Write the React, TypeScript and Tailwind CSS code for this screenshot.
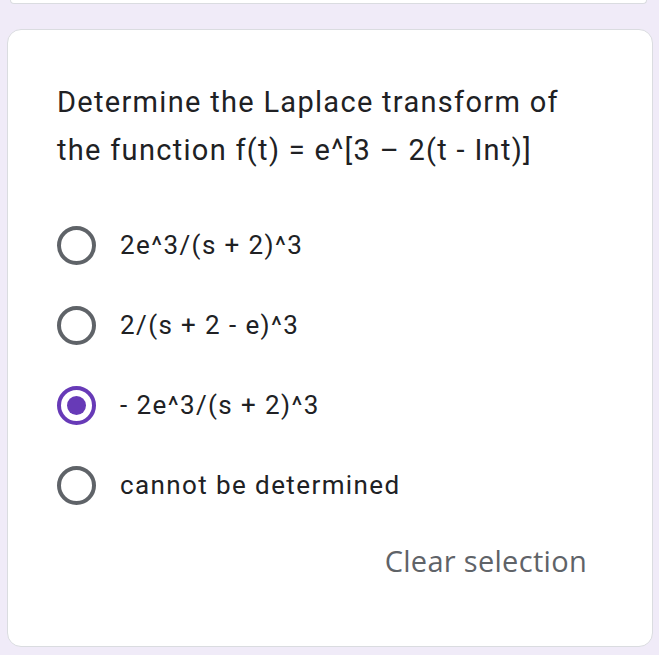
const options = [
  { label: "2e^3/(s + 2)^3", checked: false },
  { label: "2/(s + 2 - e)^3", checked: false },
  { label: "- 2e^3/(s + 2)^3", checked: true },
  { label: "cannot be determined", checked: false },
]

function Radio({ checked }: { checked: boolean }) {
  if (checked) {
    return (
      <div className="flex h-[39px] w-[39px] shrink-0 items-center justify-center rounded-full border-[4px] border-[#673ab7]">
        <div className="h-[19px] w-[19px] rounded-full bg-[#673ab7]" />
      </div>
    )
  }
  return <div className="h-[39px] w-[39px] shrink-0 rounded-full border-[4px] border-[#5f6368]" />
}

export default function App() {
  return (
    <div className="min-h-screen w-full overflow-hidden bg-[#f0ebf8] font-['Roboto',sans-serif]">
      <div className="ml-[10px] mr-[12px] h-[4px] rounded-b-[12px] border border-t-0 border-[#dadce0] bg-white" />
      <div className="ml-[7px] mr-[6px] mt-[25px] h-[618px] rounded-[14px] border border-[#dadce0] bg-white pl-[49px] pr-[65px] pt-[48px]">
        <div className="whitespace-nowrap text-[29px] leading-[48px] tracking-[1.3px] text-[#202124]">
          Determine the Laplace transform of
          <br />
          the function f(t) = e^[3 – 2(t - Int)]
        </div>
        <div className="mt-[31px] flex flex-col">
          {options.map((o) => (
            <div key={o.label} className="flex h-[80px] items-center gap-[24px]">
              <Radio checked={o.checked} />
              <span className="whitespace-nowrap text-[26px] leading-[32px] tracking-[1.4px] text-[#202124]">
                {o.label}
              </span>
            </div>
          ))}
        </div>
        <div className="mt-[20px] flex justify-end">
          <span className="font-['Open_Sans',sans-serif] text-[29px] font-medium leading-[32px] tracking-[0.3px] text-[#5f6368]">
            Clear selection
          </span>
        </div>
      </div>
    </div>
  )
}
